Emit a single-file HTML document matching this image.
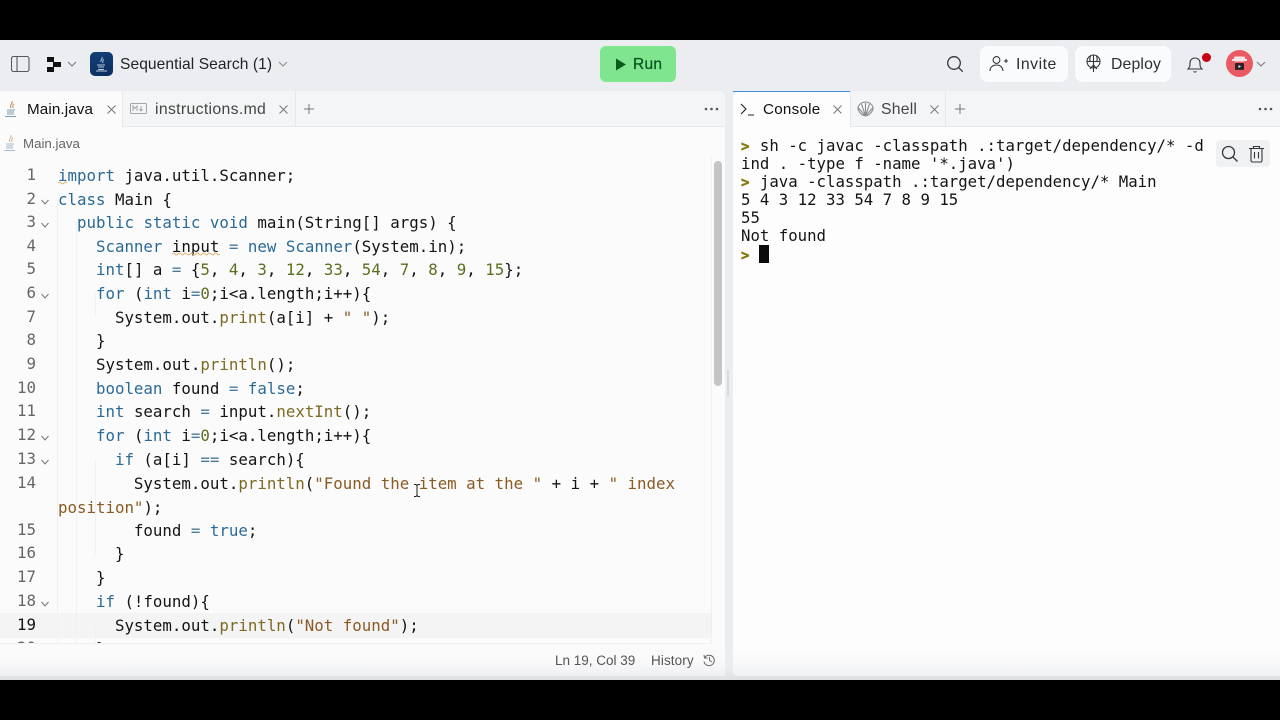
<!DOCTYPE html>
<html><head><meta charset="utf-8">
<style>
*{box-sizing:border-box;margin:0;padding:0}
html,body{width:1280px;height:720px;overflow:hidden;background:#000}
.abs,.t,.l,.n,.c,svg{position:absolute}
#app{position:absolute;left:0;top:40px;width:1280px;height:640px;background:linear-gradient(#ebedf0 0,#ebedf0 98%,#dfe0e2 100%);overflow:hidden}
.t{font-family:"Liberation Sans",sans-serif;white-space:pre;color:#1f2328;line-height:20px;margin-top:1px}
.l{font-family:"DejaVu Sans Mono",monospace;font-size:15.78px;line-height:24px;left:58px;white-space:pre;color:#141414;margin-top:1px}
.n{font-family:"DejaVu Sans Mono",monospace;font-size:15.78px;line-height:24px;width:36px;text-align:right;left:0;color:#666}
.c{font-family:"DejaVu Sans Mono",monospace;font-size:15.7px;line-height:18px;left:741px;white-space:pre;color:#141414;margin-top:1px}
.k{color:#2b6a96}.s{color:#8a5a22}.d{color:#5a6f1e}.f{color:#7d6a22}.o{color:#4a7a9c}
.fold{position:absolute;left:40px;width:10px;height:10px;margin-top:2px}
.pr{color:#857a10;font-weight:bold;font-size:14px;display:inline-block;width:9.45px;padding-left:0;vertical-align:0.5px;-webkit-text-stroke:.5px #857a10}
</style></head>
<body>
<div id="app"></div>

<!-- top bar -->
<svg style="left:11px;top:56px" width="19" height="16" fill="none" stroke="#55595e" stroke-width="1.100"><rect x="0.500" y="0.500" width="17.500" height="15" rx="2"/><path d="M6 1v14"/></svg>
<svg style="left:46px;top:56px" width="16" height="16" fill="#111"><rect x="1" y="1" width="7" height="5"/><rect x="1" y="11" width="7" height="5"/><rect x="7" y="6" width="8" height="5"/></svg>
<svg style="left:67px;top:60px" width="10" height="8" fill="none" stroke="#777" stroke-width="1"><path d="M1 2l4 4 4-4"/></svg>
<div class="abs" style="left:90px;top:52px;width:23px;height:24px;border-radius:5px;background:linear-gradient(160deg,#123f78,#0b2d5e)"></div>
<svg style="left:95px;top:56px" width="13" height="16" fill="none" stroke="#b6c6dc" stroke-width="1"><path d="M7 1c1 2-2 3-1 5M8 3c1 2-1 2 0 4"/><path d="M2 9h8M3 11h6M3 13.500h6M1 15h11"/></svg>
<div class="t" style="left:120px;top:54px;font-size:15.6px;letter-spacing:.06px">Sequential Search (1)</div>
<svg style="left:278px;top:60px" width="10" height="8" fill="none" stroke="#888" stroke-width="1"><path d="M1 2l4 4 4-4"/></svg>

<div class="abs" style="left:600px;top:46px;width:76px;height:36px;border-radius:6px;background:#7fe58f"></div>
<svg style="left:615px;top:58px" width="12" height="13"><path d="M1 .5l10 6-10 6z" fill="#0c5c22"/></svg>
<div class="t" style="left:633px;top:54px;font-size:15.500px;letter-spacing:.3px;color:#0a5420;-webkit-text-stroke:.25px #0a5420">Run</div>

<svg style="left:946px;top:55px" width="18" height="18" fill="none" stroke="#33363a" stroke-width="1.300"><circle cx="8" cy="8" r="6.300"/><path d="M12.700 12.700l4 4"/></svg>
<div class="abs" style="left:980px;top:46px;width:88px;height:36px;border-radius:8px;background:#fafbfc"></div>
<svg style="left:989px;top:55px" width="20" height="18" fill="none" stroke="#33363a" stroke-width="1.100"><circle cx="7.500" cy="5" r="3.400"/><path d="M1 16c0-4 3-6 6.500-6s6 1.500 6.500 6M15 6h4M17 4v4"/></svg>
<div class="t" style="left:1016px;top:54px;font-size:15.800px;letter-spacing:.5px;color:#2b2e33">Invite</div>
<div class="abs" style="left:1075px;top:46px;width:96px;height:36px;border-radius:8px;background:#fafbfc"></div>
<svg style="left:1085px;top:54px" width="17" height="19" fill="none" stroke="#33363a" stroke-width="1.100"><circle cx="8.500" cy="7.500" r="6.500"/><path d="M2 7.500h13M8.500 1v17M5 15l3.500-4 3.500 4M5.500 2c-1 3-1 4 0 5.500M11.500 2c1 3 1 4 0 5.500"/></svg>
<div class="t" style="left:1111px;top:54px;font-size:15.800px;letter-spacing:.15px;color:#2b2e33">Deploy</div>
<svg style="left:1186px;top:55px" width="18" height="19" fill="none" stroke="#33363a" stroke-width="1.100"><path d="M2 14c2-2 2-3 2-6 0-3 2-5 5-5s5 2 5 5c0 3 0 4 2 6zM7.500 16.500c1 .8 2 .8 3 0"/></svg>
<div class="abs" style="left:1202px;top:53px;width:9px;height:9px;border-radius:50%;background:#c9000f"></div>
<div class="abs" style="left:1226px;top:50px;width:27px;height:27px;border-radius:50%;background:#ea5a62"></div>
<svg style="left:1231px;top:55px" width="17" height="17"><rect x="3" y="1.500" width="11" height="5" rx="1.500" fill="#f5e6e6"/><rect x="1" y="4" width="15" height="2" fill="#f5e6e6"/><rect x="4" y="8" width="9" height="7" rx="1" fill="#2b2326"/><path d="M7.500 10l2.500 1.500-2.500 1.500z" fill="#eee"/></svg>
<svg style="left:1256px;top:60px" width="10" height="8" fill="none" stroke="#777" stroke-width="1"><path d="M1 2l4 4 4-4"/></svg>

<!-- left pane -->
<div class="abs" style="left:0;top:91px;width:725px;height:585px;background:#fbfbfc;border-radius:0 6px 6px 0"></div>
<div class="abs" style="left:122px;top:91px;width:603px;height:36px;background:#f4f5f6;border-radius:0 6px 0 0"></div>
<div class="abs" style="left:122px;top:91px;width:1px;height:36px;background:#e6e8ea"></div>
<div class="abs" style="left:295px;top:91px;width:1px;height:36px;background:#e6e8ea"></div>
<div class="abs" style="left:122px;top:126px;width:603px;height:1px;background:#e6e8ea"></div>
<svg style="left:4px;top:100px" width="14" height="18" fill="none" stroke="#7f9bb4" stroke-width="1"><path d="M8 1c1 3-3 4-1 7M10 4c-2 1-1 2-1 4" stroke="#c08a55"/><path d="M3 10h8M3 12h7M3 14h7M1 16.500h11"/></svg>
<div class="t" style="left:27px;top:99px;font-size:15.200px;letter-spacing:.12px;color:#111">Main.java</div>
<svg style="left:107px;top:105px" width="9" height="9" stroke="#777" stroke-width="1"><path d="M0.500 0.500l8 8M8.500 0.500l-8 8"/></svg>
<svg style="left:130px;top:103px" width="18" height="12" fill="none" stroke="#a3a6aa" stroke-width="1"><rect x="0.500" y="0.500" width="16" height="10" rx="1"/><path d="M3 8V3l2 2.500L7 3v5M11 3v5M9.500 6l1.500 2 1.500-2"/></svg>
<div class="t" style="left:155px;top:99px;font-size:15.800px;letter-spacing:.33px;color:#444">instructions.md</div>
<svg style="left:279px;top:105px" width="9" height="9" stroke="#777" stroke-width="1"><path d="M0.500 0.500l8 8M8.500 0.500l-8 8"/></svg>
<svg style="left:304px;top:104px" width="10" height="10" stroke="#777" stroke-width="1"><path d="M5 0v10M0 5h10"/></svg>
<svg style="left:704px;top:107px" width="15" height="4" fill="#555"><circle cx="2" cy="2" r="1.300"/><circle cx="7.500" cy="2" r="1.300"/><circle cx="13" cy="2" r="1.300"/></svg>
<svg style="left:3px;top:134px" width="14" height="18" fill="none" stroke="#a9b9c6" stroke-width="1"><path d="M8 1c1 3-3 4-1 7M10 4c-2 1-1 2-1 4" stroke="#d3b393"/><path d="M3 10h8M3 12h7M3 14h7M1 16.500h11"/></svg>
<div class="t" style="left:23px;top:133px;font-size:13.300px;color:#666">Main.java</div>

<!-- editor -->
<div class="abs" style="left:0;top:158px;width:711px;height:485px;overflow:hidden" id="ed">
<div class="abs" style="left:0;top:455px;width:711px;height:25px;background:#f4f4f5"></div>
<div class="abs" style="left:57px;top:40px;width:1px;height:445px;background:#f1f1f2"></div>
<div class="abs" style="left:76px;top:64px;width:1px;height:421px;background:#f1f1f2"></div>
<div class="abs" style="left:95px;top:135px;width:1px;height:24px;background:#f1f1f2"></div>
<div class="abs" style="left:95px;top:301px;width:1px;height:95px;background:#f1f1f2"></div>
<div class="abs" style="left:95px;top:467px;width:1px;height:18px;background:#f1f1f2"></div>

<div class="n" style="top:5px">1</div><div class="l" style="top:5px"><span class="k">import</span> java.util.Scanner;</div>
<div class="n" style="top:29px">2</div><div class="l" style="top:29px"><span class="k">class</span> Main {</div>
<div class="n" style="top:52px">3</div><div class="l" style="top:52px">  <span class="k">public</span> <span class="k">static</span> <span class="k">void</span> main(String[] args) {</div>
<div class="n" style="top:76px">4</div><div class="l" style="top:76px">    <span class="k">Scanner</span> input <span class="o">=</span> <span class="k">new</span> <span class="k">Scanner</span>(System.in);</div>
<div class="n" style="top:99px">5</div><div class="l" style="top:99px">    <span class="k">int</span>[] a <span class="o">=</span> {<span class="d">5</span>, <span class="d">4</span>, <span class="d">3</span>, <span class="d">12</span>, <span class="d">33</span>, <span class="d">54</span>, <span class="d">7</span>, <span class="d">8</span>, <span class="d">9</span>, <span class="d">15</span>};</div>
<div class="n" style="top:123px">6</div><div class="l" style="top:123px">    <span class="k">for</span> (<span class="k">int</span> i<span class="o">=</span><span class="d">0</span>;i&lt;a.length;i++){</div>
<div class="n" style="top:147px">7</div><div class="l" style="top:147px">      System.out.<span class="f">print</span>(a[i] + <span class="s">" "</span>);</div>
<div class="n" style="top:170px">8</div><div class="l" style="top:170px">    }</div>
<div class="n" style="top:194px">9</div><div class="l" style="top:194px">    System.out.<span class="f">println</span>();</div>
<div class="n" style="top:218px">10</div><div class="l" style="top:218px">    <span class="k">boolean</span> found <span class="o">=</span> <span class="k">false</span>;</div>
<div class="n" style="top:241px">11</div><div class="l" style="top:241px">    <span class="k">int</span> search <span class="o">=</span> input.<span class="f">nextInt</span>();</div>
<div class="n" style="top:265px">12</div><div class="l" style="top:265px">    <span class="k">for</span> (<span class="k">int</span> i<span class="o">=</span><span class="d">0</span>;i&lt;a.length;i++){</div>
<div class="n" style="top:289px">13</div><div class="l" style="top:289px">      <span class="k">if</span> (a[i] <span class="o">==</span> search){</div>
<div class="n" style="top:313px">14</div><div class="l" style="top:313px">        System.out.<span class="f">println</span>(<span class="s">"Found the item at the "</span> + i + <span class="s">" index</span></div>
<div class="l" style="top:337px"><span class="s">position"</span>);</div>
<div class="n" style="top:360px">15</div><div class="l" style="top:360px">        found <span class="o">=</span> <span class="k">true</span>;</div>
<div class="n" style="top:383px">16</div><div class="l" style="top:383px">      }</div>
<div class="n" style="top:407px">17</div><div class="l" style="top:407px">    }</div>
<div class="n" style="top:431px">18</div><div class="l" style="top:431px">    <span class="k">if</span> (!found){</div>
<div class="n" style="top:455px;color:#111">19</div><div class="l" style="top:455px">      System.out.<span class="f">println</span>(<span class="s">"Not found"</span>);</div>
<div class="n" style="top:478px">20</div><div class="l" style="top:478px">    }</div>

<svg class="fold" style="top:37px" fill="none" stroke="#777" stroke-width="1"><path d="M1.500 3l3.500 4 3.500-4"/></svg>
<svg class="fold" style="top:60px" fill="none" stroke="#777" stroke-width="1"><path d="M1.500 3l3.500 4 3.500-4"/></svg>
<svg class="fold" style="top:131px" fill="none" stroke="#777" stroke-width="1"><path d="M1.500 3l3.500 4 3.500-4"/></svg>
<svg class="fold" style="top:273px" fill="none" stroke="#777" stroke-width="1"><path d="M1.500 3l3.500 4 3.500-4"/></svg>
<svg class="fold" style="top:297px" fill="none" stroke="#777" stroke-width="1"><path d="M1.500 3l3.500 4 3.500-4"/></svg>
<svg class="fold" style="top:439px" fill="none" stroke="#777" stroke-width="1"><path d="M1.500 3l3.500 4 3.500-4"/></svg>
<svg style="left:58px;top:23px" width="10" height="4" fill="none" stroke="#d8a24a" stroke-width="0.800"><path d="M0 2q1.500-2 3 0t3 0 3 0"/></svg>
<svg style="left:172px;top:94px" width="48" height="4" fill="none" stroke="#d8a24a" stroke-width="0.800"><path d="M0 2q1.500-2 3 0t3 0 3 0 3 0 3 0 3 0 3 0 3 0 3 0 3 0 3 0 3 0 3 0 3 0 3 0 3 0"/></svg>
</div>
<div class="abs" style="left:711px;top:158px;width:1px;height:485px;background:#efeff0"></div>
<div class="abs" style="left:714px;top:161px;width:8px;height:225px;border-radius:4px;background:#c4c5c7"></div>
<div class="abs" style="left:0;top:643px;width:725px;height:33px;background:linear-gradient(#fbfbfc,#fafafb 50%,#eff0f1)"></div>
<div class="abs" style="left:0;top:643px;width:711px;height:1px;background:#f0f0f1"></div>
<div class="t" style="left:555px;top:650px;font-size:13.500px;color:#555">Ln 19, Col 39</div>
<div class="t" style="left:651px;top:650px;font-size:13.500px;letter-spacing:.1px;color:#555">History</div>
<svg style="left:702px;top:653px" width="14" height="14" fill="none" stroke="#666" stroke-width="1"><path d="M2 2l.5 3h3M2.500 5a5.200 5.200 0 1 1-.5 3.500M7.500 4v3.500l2.500 1.500"/></svg>

<!-- I-beam cursor -->
<svg style="left:412px;top:484px" width="10" height="14" fill="none" stroke="#222" stroke-width="1"><path d="M2 .5h2l1 1 1-1h2M5 1.500v10M2 12.500h2l1-1 1 1h2"/></svg>

<!-- right pane -->
<div class="abs" style="left:733px;top:91px;width:547px;height:585px;background:#fdfdfe;border-radius:6px 0 0 6px"></div>
<div class="abs" style="left:850px;top:91px;width:430px;height:36px;background:#f4f5f6"></div>
<div class="abs" style="left:850px;top:91px;width:1px;height:36px;background:#e6e8ea"></div>
<div class="abs" style="left:945px;top:91px;width:1px;height:36px;background:#e6e8ea"></div>
<div class="abs" style="left:850px;top:126px;width:430px;height:1px;background:#e6e8ea"></div>
<div class="abs" style="left:733px;top:91px;width:117px;height:1px;background:#3a8ee0"></div>
<svg style="left:740px;top:103px" width="15" height="14" fill="none" stroke="#222" stroke-width="1.100"><path d="M1 1l5 5-5 5M8 12h6"/></svg>
<div class="t" style="left:763px;top:99px;font-size:15.200px;letter-spacing:.25px;color:#111">Console</div>
<svg style="left:833px;top:105px" width="9" height="9" stroke="#777" stroke-width="1"><path d="M0.500 0.500l8 8M8.500 0.500l-8 8"/></svg>
<svg style="left:857px;top:101px" width="17" height="16" fill="none" stroke="#8a8d91" stroke-width="1.100"><path d="M8.500 15C4 14 1 10 1 7c0-3 3.500-6 7.500-6s7.500 3 7.500 6c0 3-3 7-7.500 8zM8.500 15V2M8.500 15L4.500 3M8.500 15l4-12M8.500 15L1.500 7M8.500 15l7-8"/></svg>
<div class="t" style="left:881px;top:99px;font-size:15.800px;letter-spacing:.2px;color:#444">Shell</div>
<svg style="left:930px;top:105px" width="9" height="9" stroke="#777" stroke-width="1"><path d="M0.500 0.500l8 8M8.500 0.500l-8 8"/></svg>
<svg style="left:955px;top:104px" width="10" height="10" stroke="#777" stroke-width="1"><path d="M5 0v10M0 5h10"/></svg>
<svg style="left:1258px;top:107px" width="15" height="4" fill="#555"><circle cx="2" cy="2" r="1.300"/><circle cx="7.500" cy="2" r="1.300"/><circle cx="13" cy="2" r="1.300"/></svg>

<div class="c" style="top:136px"><span class="pr">&gt;</span> sh -c javac -classpath .:target/dependency/* -d</div>
<div class="c" style="top:154px">ind . -type f -name '*.java')</div>
<div class="c" style="top:172px"><span class="pr">&gt;</span> java -classpath .:target/dependency/* Main</div>
<div class="c" style="top:190px">5 4 3 12 33 54 7 8 9 15</div>
<div class="c" style="top:208px">55</div>
<div class="c" style="top:226px">Not found</div>
<div class="c" style="top:245px"><span class="pr">&gt;</span></div>
<div class="abs" style="left:759px;top:245px;width:10px;height:18px;background:#0b0b0b"></div>

<div class="abs" style="left:1216px;top:140px;width:54px;height:27px;border-radius:4px;background:#f0f1f2"></div>
<svg style="left:1221px;top:145px" width="18" height="18" fill="none" stroke="#33363a" stroke-width="1.300"><circle cx="7.500" cy="7.500" r="6"/><path d="M12 12l4.500 4.500"/></svg>
<svg style="left:1248px;top:145px" width="17" height="18" fill="none" stroke="#33363a" stroke-width="1.100"><path d="M1 3.500h15M5.500 3.500V1.500h6v2M3 3.500v12a1.500 1.500 0 0 0 1.500 1.500h8a1.500 1.500 0 0 0 1.500-1.500v-12M6.500 7v6.500M10.500 7v6.500"/></svg>

<div class="abs" style="left:733px;top:650px;width:547px;height:26px;background:linear-gradient(#fdfdfe,#f2f3f4);border-radius:0 0 0 6px"></div>
<div class="abs" style="left:727px;top:370px;width:2px;height:26px;background:#d8dadd"></div>
</body></html>
